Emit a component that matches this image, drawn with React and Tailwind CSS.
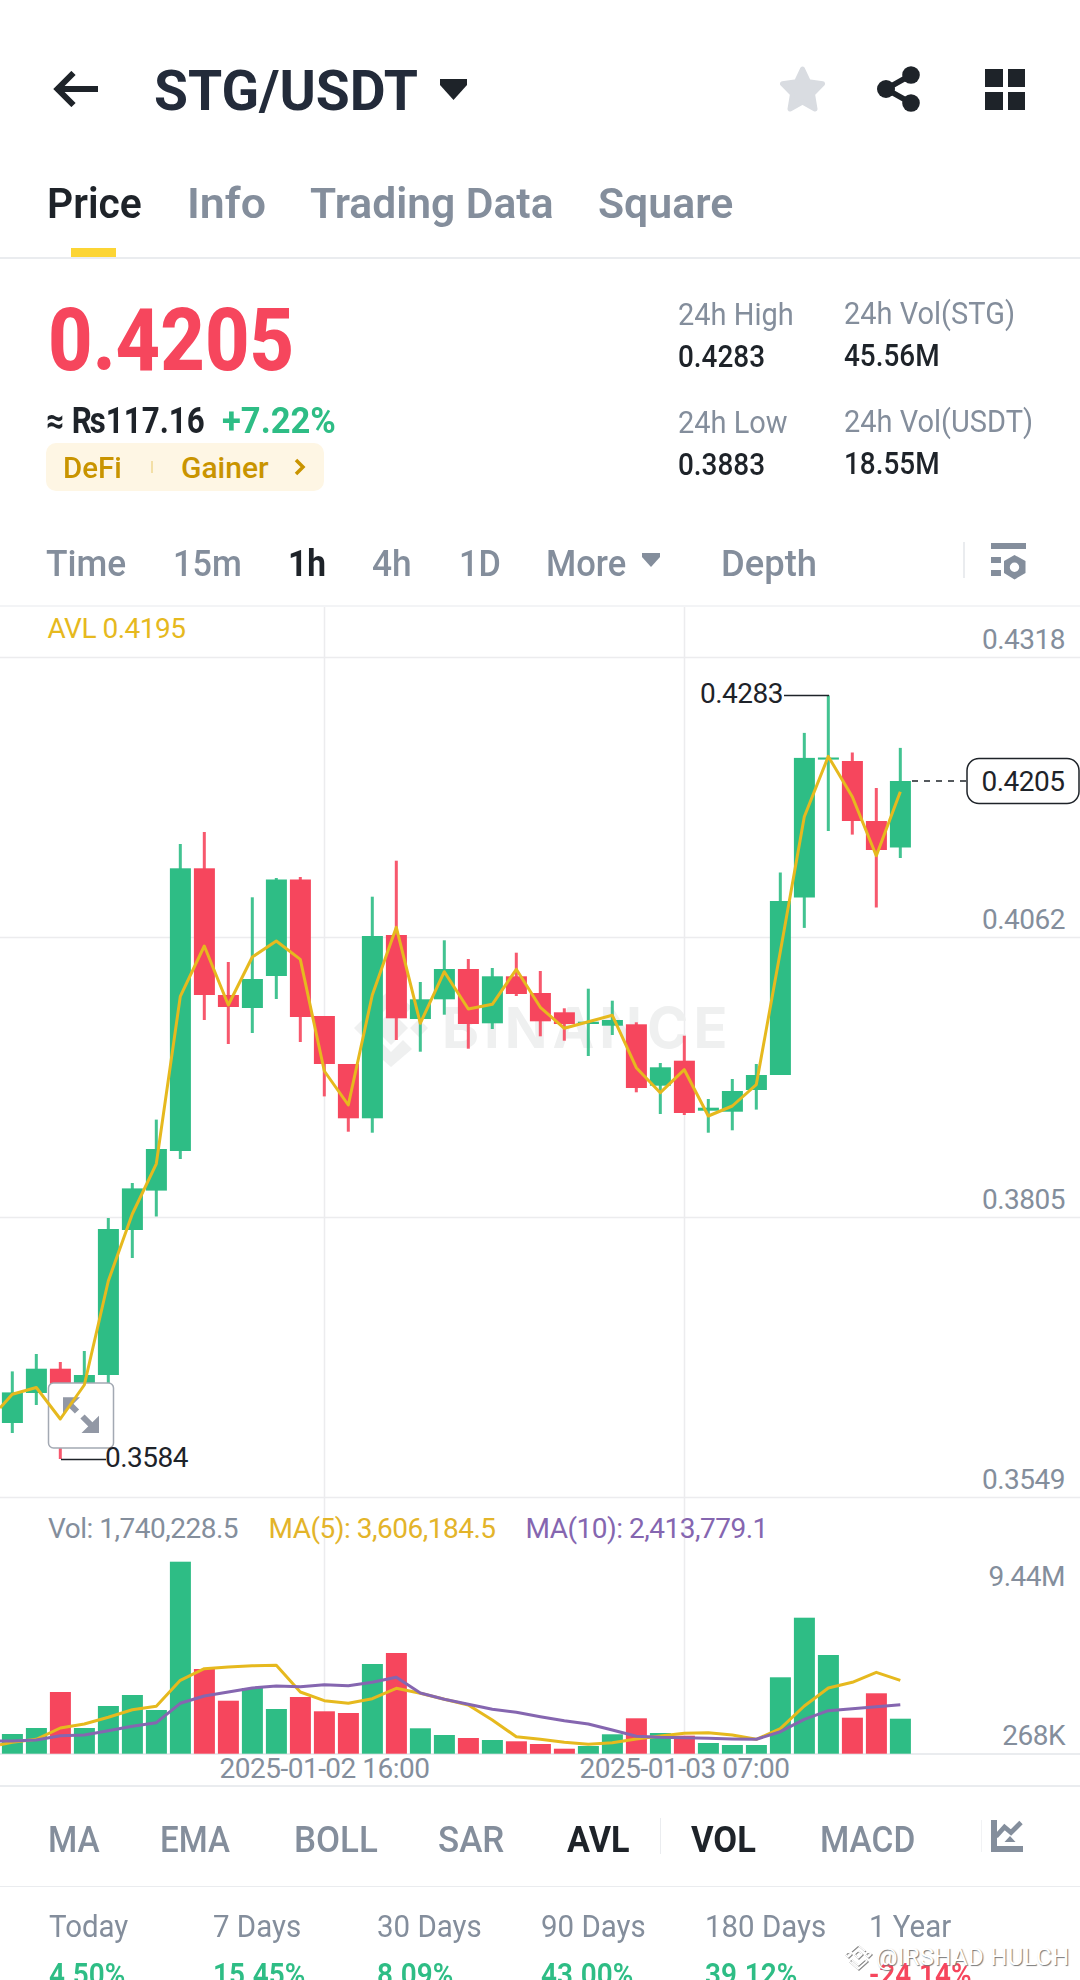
import clsx from "clsx";

const GREEN = "#2ebd85";
const RED = "#f6465d";
const STEP = 24;

const cx = (i) => 12.3 + i * STEP;

// [high, top, bottom, low, up, volumeTop] in chart units
const candles = [
  [1371.4, 1392.4, 1423, 1433, 1, 1734],
  [1354, 1368.7, 1393, 1405, 1, 1728],
  [1362, 1368.7, 1390, 1459, 0, 1692],
  [1351, 1375, 1392, 1400, 1, 1728],
  [1218, 1229, 1375, 1386, 1, 1706],
  [1183, 1188.4, 1230, 1258, 1, 1695],
  [1119.6, 1149, 1190.6, 1216.5, 1, 1710],
  [844, 868.3, 1151, 1159, 1, 1561.7],
  [832, 868.3, 995, 1020, 0, 1669],
  [962, 995, 1007, 1044, 0, 1700.7],
  [897.3, 979, 1008, 1033, 1, 1688],
  [878, 879.5, 976, 999, 1, 1709],
  [877, 879.5, 1017, 1042, 0, 1697],
  [1016, 1016, 1064, 1096.4, 0, 1711.3],
  [1064, 1064, 1118.3, 1131.7, 0, 1713],
  [896.7, 936, 1118.3, 1132.7, 1, 1664],
  [860.7, 935, 1018.3, 1040, 0, 1653],
  [982, 999.3, 1019, 1051.7, 1, 1728.3],
  [940.3, 969, 999.3, 1014.7, 1, 1735],
  [959, 969, 1024, 1048.7, 0, 1738],
  [968, 976.3, 1023.3, 1029, 1, 1740],
  [952.7, 976.3, 994, 996, 0, 1741.3],
  [971, 993, 1021.3, 1036.3, 0, 1744],
  [1008.3, 1012.3, 1024, 1040.7, 0, 1748.7],
  [988.7, 1021.7, 1024, 1056, 1, 1746],
  [1000.7, 1020, 1025.7, 1035, 1, 1734.3],
  [1022.3, 1024.3, 1088, 1092.3, 0, 1718.3],
  [1063, 1067.3, 1085.7, 1114, 1, 1733],
  [1035.7, 1060.7, 1113, 1115, 0, 1735.7],
  [1099, 1107.7, 1110.7, 1132.7, 1, 1743],
  [1079, 1091, 1111.7, 1130.3, 1, 1745],
  [1064, 1075, 1090, 1109.6, 1, 1745],
  [872.5, 901, 1075, 1075, 1, 1677.3],
  [732.9, 757.9, 897.5, 927.9, 1, 1617.7],
  [695.4, 757.5, 759.6, 831, 1, 1655],
  [752.5, 761, 821, 834.6, 0, 1717.7],
  [788, 821, 850, 907.5, 0, 1693.3],
  [747.9, 781, 847.5, 858, 1, 1718.7],
];

const avl = [
  1394.2, 1387.5, 1419, 1385, 1281, 1214, 1163.8, 996.4, 946, 1005, 957, 941,
  959.4, 1071, 1105, 995, 927.3, 1023.3, 971.7, 1009, 1004.3, 969.3, 1007.3,
  1028.3, 1021.7, 1015.3, 1067.7, 1092.7, 1069.7, 1116, 1106, 1084.6, 951.8,
  816.8, 756.4, 796.8, 855.7, 791.8,
];

const ma5 = [
  1742.3, 1739.3, 1728, 1724, 1717.3, 1709.7, 1706.3, 1680.3, 1668.7, 1667,
  1665.7, 1665.3, 1692, 1700.7, 1703.3, 1698.7, 1688.3, 1693.3, 1699.3, 1705,
  1720, 1736.7, 1739.3, 1742.3, 1744.3, 1742.7, 1739, 1736, 1733.3, 1732.7,
  1735, 1739.3, 1728.7, 1706, 1688, 1682.3, 1672.3, 1680.3,
];

const ma10 = [
  1741, 1740, 1735.7, 1735, 1730.7, 1726.3, 1722.7, 1703.3, 1696, 1692, 1688,
  1686, 1686.7, 1684.7, 1685.7, 1682.3, 1677.3, 1693, 1699.3, 1704.3, 1709.3,
  1712.3, 1716.7, 1720.7, 1724, 1730, 1736.3, 1737.3, 1737.7, 1738.3, 1739,
  1739.3, 1731.7, 1719.3, 1710.7, 1708.7, 1706.7, 1704.7,
];

const linePoints = (start, values) =>
  [`0,${start}`, ...values.map((y, i) => `${cx(i)},${y}`)].join(" ");

const tabs = [
  { label: "Price", className: "w-[139px]", scale: "scale-x-[0.95]", active: true },
  { label: "Info", className: "w-[124px] pl-px", scale: "scale-x-[1.04]" },
  { label: "Trading Data", className: "w-[288px]", scale: "scale-x-[0.99]" },
  { label: "Square", className: "w-[140px]", scale: "scale-x-[0.995]" },
];

const intervals = [
  { label: "Time", className: "w-[127px]", scale: "scale-x-[0.98]" },
  { label: "15m", className: "w-[115px]", scale: "scale-x-[0.95]" },
  { label: "1h", className: "w-[84px]", scale: "scale-x-[0.93]", active: true },
  { label: "4h", className: "w-[87px]", scale: "scale-x-[0.98]" },
  { label: "1D", className: "w-[87px]", scale: "scale-x-[0.95]" },
  { label: "More", className: "w-[96px]", scale: "scale-x-[0.96]" },
];

const stats = [
  [
    { label: "24h High", value: "0.4283" },
    { label: "24h Low", value: "0.3883" },
  ],
  [
    { label: "24h Vol(STG)", value: "45.56M" },
    { label: "24h Vol(USDT)", value: "18.55M" },
  ],
];

const indicators = [
  { label: "MA", className: "w-[112px]", scale: "scale-x-[0.93]" },
  { label: "EMA", className: "w-[134px]", scale: "scale-x-[0.92]" },
  { label: "BOLL", className: "w-[144px]", scale: "scale-x-[0.97]" },
  { label: "SAR", className: "w-[129px]", scale: "scale-x-[0.97]" },
  { label: "AVL", className: "w-[93px]", scale: "scale-x-[0.95]", active: true },
];

const performance = [
  { label: "Today", value: "4.50%" },
  { label: "7 Days", value: "15.45%" },
  { label: "30 Days", value: "8.09%" },
  { label: "90 Days", value: "43.00%" },
  { label: "180 Days", value: "39.12%" },
  { label: "1 Year", value: "-24.14%", down: true },
];

const Caret = ({ className }) => (
  <svg viewBox="0 0 27 21" className={className} fill="currentColor">
    <path d="M0 0H27V6L13.5 21L0 6Z" />
  </svg>
);

const Label = ({ scale, children }) => (
  <span className={clsx("inline-block origin-left", scale)}>{children}</span>
);

const Header = () => (
  <header className="flex h-[178px] items-center pl-[53px] text-[#1e2329]">
    <svg viewBox="0 0 45 36" className="h-9 w-[45px]" fill="none" stroke="currentColor" strokeWidth="6">
      <path d="M3 18H45M20.5 2L4.500 18L20.500 34" />
    </svg>
    <h1 className="mt-[4px] ml-[56px] w-[286px] text-[56px] leading-none font-bold whitespace-nowrap text-[#232b3a]">
      <Label scale="scale-x-[0.985]">STG/USDT</Label>
    </h1>
    <Caret className="h-[21px] w-[27px]" />
    <svg viewBox="0 0 45 46" className="ml-[313px] h-[46px] w-[45px] text-[#d9dce1]">
      <path
        d="M22.500 3L28.500 15.800L42.500 17.800L32.500 28L35 43L22.500 36L10 43L12.500 28L2.500 17.800L16.500 15.800Z"
        fill="currentColor"
        stroke="currentColor"
        strokeWidth="5"
        strokeLinejoin="round"
      />
    </svg>
    <svg viewBox="0 0 43 46" className="ml-[52px] h-[46px] w-[43px]" fill="currentColor">
      <path d="M34 9L9 23L34 37" fill="none" stroke="currentColor" strokeWidth="5.500" />
      <circle cx="34" cy="9" r="8.800" />
      <circle cx="9" cy="23" r="9" />
      <circle cx="34" cy="37" r="8.800" />
    </svg>
    <div className="ml-[65px] grid h-[41px] w-10 grid-cols-2 gap-[5px]">
      <span className="bg-[#1e2329]" />
      <span className="bg-[#1e2329]" />
      <span className="bg-[#1e2329]" />
      <span className="bg-[#1e2329]" />
    </div>
  </header>
);

const Tabs = () => (
  <nav className="flex h-[81px] border-b-2 border-[#eaecef] pl-[47px]">
    {tabs.map((tab) => (
      <div
        key={tab.label}
        className={clsx(
          "text-[43px] leading-[50px] font-semibold whitespace-nowrap",
          tab.className,
          tab.active ? "text-[#1e2329]" : "text-[#848e9c]"
        )}
      >
        <Label scale={tab.scale}>{tab.label}</Label>
        {tab.active && <div className="mt-5 ml-6 h-[9px] w-[45px] bg-[#fcd535]" />}
      </div>
    ))}
  </nav>
);

const PriceSummary = () => (
  <section className="flex h-[262px] pl-[46px]">
    <div className="w-[632px] pt-[31px]">
      <div className="h-[108px] pl-[2px] text-[87px] leading-[100px] font-extrabold text-[#f6465d]">
        <Label scale="scale-x-[0.89]">0.4205</Label>
      </div>
      <div className="flex h-[45px] text-[36px] leading-[46px] font-bold whitespace-nowrap">
        <span className="w-[176px] text-[#1e2329]">
          <Label scale="scale-x-[0.87]">≈ ₨117.16</Label>
        </span>
        <span className="text-[#2ebd85]">
          <Label scale="scale-x-[0.96]">+7.22%</Label>
        </span>
      </div>
      <div className="flex h-12 w-[278px] items-center rounded-[10px] bg-[#fef6e4] pl-[17px] text-[30px] font-medium text-[#c99400]">
        <span className="w-[88px]">
          <Label scale="scale-x-[0.98]">DeFi</Label>
        </span>
        <span className="h-3 w-[2px] bg-[#f3dfa6]" />
        <span className="ml-7 w-[113px]">Gainer</span>
        <svg viewBox="0 0 12 18" className="h-[18px] w-3" fill="none" stroke="currentColor" strokeWidth="3.500">
          <path d="M2 2L9 9L2 16" />
        </svg>
      </div>
    </div>
    {stats.map((column, i) => (
      <div
        key={column[0].label}
        className={clsx(
          "flex flex-col gap-6 text-[31px] leading-[42px] whitespace-nowrap",
          i === 0 ? "w-[166px] pt-[35px]" : "pt-[34px]"
        )}
      >
        {column.map((stat) => (
          <div key={stat.label}>
            <div className="text-[#848e9c]">
              <Label scale="scale-x-[0.935]">{stat.label}</Label>
            </div>
            <div className="font-medium text-[#1e2329]">
              <Label scale="scale-x-90">{stat.value}</Label>
            </div>
          </div>
        ))}
      </div>
    ))}
  </section>
);

const IntervalBar = () => (
  <div className="flex h-[86px] items-center border-b-2 border-[#f3f4f6] pt-[2px] pl-[46px] text-[36px] whitespace-nowrap text-[#848e9c]">
    {intervals.map((item) => (
      <span
        key={item.label}
        className={clsx(item.className, item.active ? "font-bold text-[#1e2329]" : "font-medium")}
      >
        <Label scale={item.scale}>{item.label}</Label>
      </span>
    ))}
    <Caret className="-mt-[8px] h-[14px] w-[18px]" />
    <span className="ml-[61px] w-[242px] font-medium">
      <Label scale="scale-x-[1.01]">Depth</Label>
    </span>
    <span className="-mt-[8px] h-9 w-[2px] bg-[#eaecef]" />
    <svg viewBox="0 0 35 37" className="-mt-[5px] ml-[26px] h-[37px] w-[35px]" fill="currentColor">
      <path d="M0 0H35V6H0ZM0 14H10V20H0ZM0 27H10V33H0Z" />
      <path
        d="M23.500 12L34.500 18V30L23.500 36.500L13 30V18ZM23.500 19.500A4.700 4.700 0 1 0 23.500 28.900A4.700 4.700 0 1 0 23.500 19.500Z"
        fillRule="evenodd"
      />
    </svg>
  </div>
);

const Chart = () => (
  <svg
    viewBox="0 607 1080 1178"
    className="block h-[1178px] w-[1080px] font-[Roboto,sans-serif] text-[28px] tracking-[-0.5px]"
  >
    {/* Grid */}
    <g stroke="#ececee" strokeWidth="1.500">
      <path d="M324.500 607V1753M684.500 607V1753" />
      <path d="M0 657.500H1080M0 937.500H1080M0 1217.500H1080M0 1497.500H1080" />
    </g>
    <path d="M0 1754H1080" stroke="#eaecef" strokeWidth="2" />

    {/* Watermark */}
    <g fill="#eff0f0">
      <path d="M391 1011L408 1028L391 1045L374 1028ZM363 1019L372 1028L363 1037L354 1028ZM419 1019L428 1028L419 1037L410 1028Z" />
      <path d="M379 1040L391 1052L403 1040L412 1049L391 1067L367 1046Z" />
      <path d="M379 1016L391 1004L403 1016L412 1007L391 989L370 1007Z" />
      <text x="442" y="1048" textLength="285" className="font-[Inter,sans-serif] text-[56px] font-bold">
        BINANCE
      </text>
    </g>

    {/* Candles and volume */}
    {candles.map(([high, top, bottom, low, up, vol], i) => {
      const color = up ? GREEN : RED;
      return (
        <g key={i} fill={color}>
          <rect x={cx(i) - 1.5} y={high} width="3" height={low - high} opacity="0.9" />
          <rect x={cx(i) - 10.4} y={top} width="21" height={bottom - top} />
          <rect x={cx(i) - 10.4} y={vol} width="21" height={1753.7 - vol} />
        </g>
      );
    })}

    {/* Expand button */}
    <rect x="48.500" y="1383" width="65" height="65" rx="5" fill="#fff" stroke="#a3a9b3" strokeWidth="1.500" />
    <g fill="#9298a5" stroke="#9298a5">
      <path d="M63 1397.300H80L63 1414.300ZM99 1415.700V1433H81.500Z" stroke="none" />
      <path d="M69 1403.500L77 1411.500M82.500 1416.500L93 1427" strokeWidth="6" />
    </g>

    <g fill="none" strokeWidth="3" strokeLinejoin="round">
      <polyline points={linePoints(1408, avl)} stroke="#e6b91e" />
      <polyline points={linePoints(1744.7, ma5)} stroke="#e6b91e" />
      <polyline points={linePoints(1741, ma10)} stroke="#8566b0" />
    </g>

    {/* High, low and last price */}
    <g fill="none" stroke="#1e2329" strokeWidth="1.500">
      <path d="M784 695.500H829M61 1459.500H106" />
      <path d="M912 781H966" strokeDasharray="6 6" />
      <rect x="967" y="758.500" width="112" height="45" rx="12" fill="#fff" />
    </g>
    <g fill="#1e2329">
      <text x="700" y="703">0.4283</text>
      <text x="105" y="1467">0.3584</text>
      <text x="981.500" y="791">0.4205</text>
    </g>

    <g fill="#848e9c" textAnchor="end">
      <text x="1065" y="649">0.4318</text>
      <text x="1065" y="929">0.4062</text>
      <text x="1065" y="1209">0.3805</text>
      <text x="1065" y="1489">0.3549</text>
      <text x="1065" y="1586">9.44M</text>
      <text x="1065" y="1745">268K</text>
    </g>
    <text x="47.500" y="638" fill="#e6b91e">AVL 0.4195</text>
    <text x="48" y="1538" fill="#848e9c">Vol: 1,740,228.5</text>
    <text x="268.500" y="1538" fill="#e3b42a">MA(5): 3,606,184.5</text>
    <text x="525.500" y="1538" fill="#8566b0">MA(10): 2,413,779.1</text>
    <g fill="#848e9c" textAnchor="middle">
      <text x="324.500" y="1778">2025-01-02 16:00</text>
      <text x="684.500" y="1778">2025-01-03 07:00</text>
    </g>
  </svg>
);

const IndicatorBar = () => (
  <div className="flex h-[102px] items-center border-t-2 border-b border-[#eaecef] pt-1.5 pl-[48px] text-[36px] font-medium whitespace-nowrap text-[#848e9c]">
    {indicators.map((item) => (
      <span
        key={item.label}
        className={clsx(item.className, item.active && "font-bold text-[#1e2329]")}
      >
        <Label scale={item.scale}>{item.label}</Label>
      </span>
    ))}
    <span className="-mt-[8px] h-9 w-px bg-[#eaecef]" />
    <span className="ml-[30px] w-[129px] font-bold text-[#1e2329]">
      <Label scale="scale-x-[0.96]">VOL</Label>
    </span>
    <span className="w-[161px]">
      <Label scale="scale-x-[0.93]">MACD</Label>
    </span>
    <span className="-mt-[8px] h-8 w-px bg-[#f1f2f4]" />
    <svg viewBox="0 0 32 32" className="-mt-[8px] ml-[9px] size-8" fill="currentColor">
      <path d="M0 0H6V26H32V32H0Z" />
      <path d="M5 16.500L13.500 7L20 12.500L30 2.500" fill="none" stroke="currentColor" strokeWidth="4.800" />
      <path d="M13.500 22L19 16L24.500 22Z" />
    </svg>
  </div>
);

const Performance = () => (
  <div className="flex pt-[18px] pl-[49px] text-[31px] whitespace-nowrap">
    {performance.map((item) => (
      <div key={item.label} className="w-[164px]">
        <div className="leading-[44px] text-[#848e9c]">
          <Label scale="scale-x-95">{item.label}</Label>
        </div>
        <div
          className={clsx(
            "leading-[51px] font-semibold",
            item.down ? "text-[#f6465d]" : "text-[#2ebd85]"
          )}
        >
          <Label scale="scale-x-[0.9]">{item.value}</Label>
        </div>
      </div>
    ))}
  </div>
);

const AuthorMark = () => (
  <div className="absolute top-[1941px] left-[844px] flex items-center gap-1 text-white">
    <svg viewBox="0 0 28 28" className="size-7 drop-shadow-[1px_1px_0px_#8b8b8b]" fill="none" stroke="currentColor" strokeWidth="1.500">
      <path d="M7 8L14 2L21 8M10 11L14 7.500L18 11L14 15ZM1 11L4 14L7 11L4 9ZM21 11L24 14L27 11L24 9ZM7 16L14 22L21 16L23 18L14 26L5 18Z" />
    </svg>
    <span className="text-[24px] leading-8 tracking-[0.3px] whitespace-nowrap [text-shadow:1px_1px_1px_#777]">
      @IRSHAD HULCH
    </span>
  </div>
);

const App = () => {
  return (
    <div className="relative h-[1980px] w-[1080px] overflow-hidden bg-white font-[Roboto,sans-serif]">
      <Header />
      <Tabs />
      <PriceSummary />
      <IntervalBar />
      <Chart />
      <IndicatorBar />
      <Performance />
      <AuthorMark />
    </div>
  );
};

export default App;
